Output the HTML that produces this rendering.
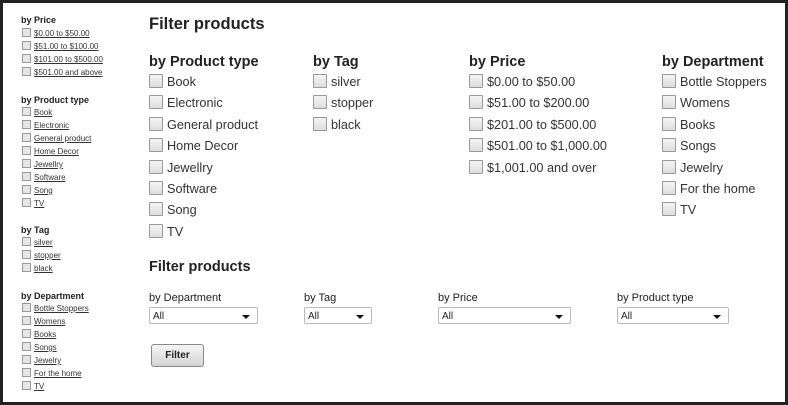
<!DOCTYPE html><html><head><style>
body{margin:0;width:788px;height:405px;overflow:hidden;background:#222;font-family:"Liberation Sans",sans-serif;color:#222}
#f{position:absolute;left:3px;top:3px;width:782px;height:399px;background:#fff}
.a{position:absolute;white-space:nowrap}
.sh{font-size:9px;font-weight:bold}
.si{font-size:8px;text-decoration:underline;color:#333}
.si:before{content:"";display:inline-block;width:7px;height:7px;border:1px solid #999;background:#e6e6e6;margin-right:3px;vertical-align:-1px;text-decoration:none}
.h{font-size:14.5px;font-weight:bold}
.it{font-size:12.7px;color:#333}
.it:before{content:"";display:inline-block;width:12px;height:12px;border:1px solid #999;background:linear-gradient(#f4f4f4,#ddd);margin-right:4px;vertical-align:-2px;border-radius:1px}
.lb{font-size:11px}
.sel{position:absolute;height:17px;border:1px solid #bbb;border-radius:2px;background:#fff;font-size:10px;line-height:17px;padding-left:3px;box-sizing:border-box}
.sel:after{content:"";position:absolute;right:7px;top:7px;border-left:4px solid transparent;border-right:4px solid transparent;border-top:4px solid #111}
</style></head><body><div id="f"></div>
<div class="a sh" style="left:21px;top:15px">by Price</div>
<div class="a si" style="left:22px;top:28px">$0.00 to $50.00</div>
<div class="a si" style="left:22px;top:41px">$51.00 to $100.00</div>
<div class="a si" style="left:22px;top:54px">$101.00 to $500.00</div>
<div class="a si" style="left:22px;top:67px">$501.00 and above</div>
<div class="a sh" style="left:21px;top:95px">by Product type</div>
<div class="a si" style="left:22px;top:107px">Book</div>
<div class="a si" style="left:22px;top:120px">Electronic</div>
<div class="a si" style="left:22px;top:133px">General product</div>
<div class="a si" style="left:22px;top:146px">Home Decor</div>
<div class="a si" style="left:22px;top:159px">Jewellry</div>
<div class="a si" style="left:22px;top:172px">Software</div>
<div class="a si" style="left:22px;top:185px">Song</div>
<div class="a si" style="left:22px;top:198px">TV</div>
<div class="a sh" style="left:21px;top:225px">by Tag</div>
<div class="a si" style="left:22px;top:237px">silver</div>
<div class="a si" style="left:22px;top:250px">stopper</div>
<div class="a si" style="left:22px;top:263px">black</div>
<div class="a sh" style="left:21px;top:291px">by Department</div>
<div class="a si" style="left:22px;top:303px">Bottle Stoppers</div>
<div class="a si" style="left:22px;top:316px">Womens</div>
<div class="a si" style="left:22px;top:329px">Books</div>
<div class="a si" style="left:22px;top:342px">Songs</div>
<div class="a si" style="left:22px;top:355px">Jewelry</div>
<div class="a si" style="left:22px;top:368px">For the home</div>
<div class="a si" style="left:22px;top:381px">TV</div>

<div class="a" style="left:149px;top:15px;font-size:16.5px;font-weight:bold">Filter products</div>
<div class="a h" style="left:149px;top:54px">by Product type</div>
<div class="a h" style="left:313px;top:54px">by Tag</div>
<div class="a h" style="left:469px;top:54px">by Price</div>
<div class="a h" style="left:662px;top:54px">by Department</div>
<div class="a" style="left:149px;top:72px;line-height:21.4px">
<div class="it">Book</div><div class="it">Electronic</div><div class="it">General product</div><div class="it">Home Decor</div><div class="it">Jewellry</div><div class="it">Software</div><div class="it">Song</div><div class="it">TV</div></div>
<div class="a" style="left:313px;top:72px;line-height:21.4px">
<div class="it">silver</div><div class="it">stopper</div><div class="it">black</div></div>
<div class="a" style="left:469px;top:72px;line-height:21.4px">
<div class="it">$0.00 to $50.00</div><div class="it">$51.00 to $200.00</div><div class="it">$201.00 to $500.00</div><div class="it">$501.00 to $1,000.00</div><div class="it">$1,001.00 and over</div></div>
<div class="a" style="left:662px;top:72px;line-height:21.4px">
<div class="it">Bottle Stoppers</div><div class="it">Womens</div><div class="it">Books</div><div class="it">Songs</div><div class="it">Jewelry</div><div class="it">For the home</div><div class="it">TV</div></div>

<div class="a h" style="left:149px;top:259px">Filter products</div>
<div class="a lb" style="left:149px;top:292px">by Department</div>
<div class="a lb" style="left:304px;top:292px">by Tag</div>
<div class="a lb" style="left:438px;top:292px">by Price</div>
<div class="a lb" style="left:617px;top:292px">by Product type</div>
<div class="sel" style="left:149px;top:307px;width:109px">All</div>
<div class="sel" style="left:304px;top:307px;width:68px">All</div>
<div class="sel" style="left:438px;top:307px;width:133px">All</div>
<div class="sel" style="left:617px;top:307px;width:112px">All</div>
<div class="a" style="left:151px;top:344px;width:53px;height:23px;border:1px solid #888;border-radius:3px;background:linear-gradient(#f6f6f6,#d4d4d4);box-sizing:border-box;font-size:10px;font-weight:bold;text-align:center;line-height:21px">Filter</div>
</body></html>
